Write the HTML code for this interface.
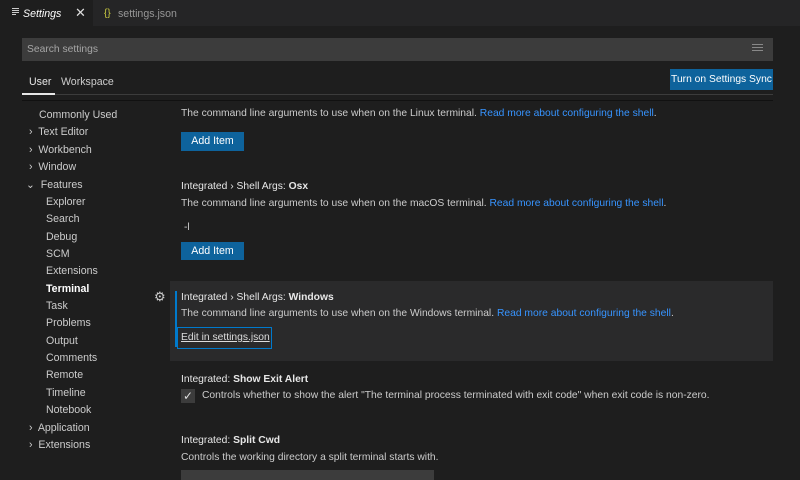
<!DOCTYPE html>
<html><head><style>
*{margin:0;padding:0;box-sizing:border-box}
body{width:800px;height:474px;overflow:hidden;background:#1e1e1e;font-family:"Liberation Sans",sans-serif;font-size:10.3px;color:#cccccc;position:relative}
.a{position:absolute;white-space:nowrap}
.t{line-height:14px}
.nav{position:absolute;line-height:14px;white-space:nowrap;font-size:10.6px}
.btn{position:absolute;background:#0e639c;color:#fff;text-align:center;line-height:18px;font-size:10.6px;white-space:nowrap}
.lk{color:#3794ff}
b{color:#e7e7e7}
.h{color:#e7e7e7}
</style></head><body>
<div class="a" style="left:0;top:0;width:800px;height:26px;background:#252526"></div>
<div class="a" style="left:0;top:0;width:93px;height:26px;background:#1e1e1e"></div>
<div class="a" style="left:12px;top:8px;width:7px;height:1px;background:#ccc;box-shadow:0 2px 0 #ccc,0 4px 0 #ccc"></div>
<div class="a" style="left:12px;top:14px;width:4px;height:1px;background:#ccc"></div>
<div class="a t" style="left:23px;top:7px;font-style:italic;color:#fff;font-size:10.6px">Settings</div>
<div class="a t" style="left:75px;top:6px;color:#ddd;font-size:13px">✕</div>
<div class="a t" style="left:104px;top:7px;color:#cbcb41;font-size:10px">{}</div>
<div class="a t" style="left:118px;top:7px;color:#969696;font-size:10.6px">settings.json</div>

<div class="a" style="left:22px;top:38px;width:751px;height:23px;background:#3c3c3c"></div>
<div class="a t" style="left:27px;top:43px;color:#a6a6a6">Search settings</div>
<div class="a" style="left:752px;top:44px;width:11px;height:1px;background:#888;box-shadow:0 3px 0 #888,0 6px 0 #888"></div>

<div class="a t" style="left:29px;top:75px;color:#e7e7e7;font-size:10.6px">User</div>
<div class="a t" style="left:61px;top:75px;color:#ccc;font-size:10.6px">Workspace</div>
<div class="a" style="left:22px;top:94px;width:751px;height:1px;background:#3c3c3c"></div>
<div class="a" style="left:22px;top:93px;width:33px;height:2px;background:#e7e7e7"></div>
<div class="btn" style="left:670px;top:69px;width:103px;height:21px;line-height:21px;font-size:10.3px">Turn on Settings Sync</div>
<div class="a" style="left:22px;top:100px;width:751px;height:1px;background:#111"></div>

<div class="nav" style="left:39px;top:108px">Commonly Used</div>
<div class="nav" style="left:29px;top:125px">›&nbsp; Text Editor</div>
<div class="nav" style="left:29px;top:143px">›&nbsp; Workbench</div>
<div class="nav" style="left:29px;top:160px">›&nbsp; Window</div>
<div class="nav" style="left:26px;top:178px">⌄ &nbsp;Features</div>
<div class="nav" style="left:46px;top:195px">Explorer</div>
<div class="nav" style="left:46px;top:212px">Search</div>
<div class="nav" style="left:46px;top:230px">Debug</div>
<div class="nav" style="left:46px;top:247px">SCM</div>
<div class="nav" style="left:46px;top:264px">Extensions</div>
<div class="nav" style="left:46px;top:282px;font-weight:bold;color:#fff">Terminal</div>
<div class="nav" style="left:46px;top:299px">Task</div>
<div class="nav" style="left:46px;top:316px">Problems</div>
<div class="nav" style="left:46px;top:334px">Output</div>
<div class="nav" style="left:46px;top:351px">Comments</div>
<div class="nav" style="left:46px;top:368px">Remote</div>
<div class="nav" style="left:46px;top:386px">Timeline</div>
<div class="nav" style="left:46px;top:403px">Notebook</div>
<div class="nav" style="left:29px;top:421px">›&nbsp; Application</div>
<div class="nav" style="left:29px;top:438px">›&nbsp; Extensions</div>

<div class="a t" style="left:181px;top:107px">The command line arguments to use when on the Linux terminal. <span class="lk">Read more about configuring the shell</span>.</div>
<div class="btn" style="left:181px;top:132px;width:63px;height:19px">Add Item</div>
<div class="a t h" style="left:181px;top:180px">Integrated › Shell Args: <b>Osx</b></div>
<div class="a t" style="left:181px;top:197px">The command line arguments to use when on the macOS terminal. <span class="lk">Read more about configuring the shell</span>.</div>
<div class="a t" style="left:184px;top:221px">-l</div>
<div class="btn" style="left:181px;top:242px;width:63px;height:18px">Add Item</div>

<div class="a" style="left:170px;top:281px;width:603px;height:80px;background:#2a2a2b"></div>
<div class="a" style="left:175px;top:291px;width:2px;height:56px;background:#007acc"></div>
<div class="a t" style="left:154px;top:290px;font-size:13px;color:#ccc">⚙</div>
<div class="a t h" style="left:181px;top:291px">Integrated › Shell Args: <b>Windows</b></div>
<div class="a t" style="left:181px;top:307px">The command line arguments to use when on the Windows terminal. <span class="lk">Read more about configuring the shell</span>.</div>
<div class="a" style="left:177px;top:327px;width:95px;height:22px;border:1px solid #007acc"></div>
<div class="a t" style="left:181px;top:331px;text-decoration:underline;color:#ddd">Edit in settings.json</div>

<div class="a t h" style="left:181px;top:373px">Integrated: <b>Show Exit Alert</b></div>
<div class="a" style="left:181px;top:389px;width:14px;height:14px;background:#3c3c3c;color:#ddd;font-size:12px;line-height:14px;text-align:center">✓</div>
<div class="a t" style="left:202px;top:389px">Controls whether to show the alert "The terminal process terminated with exit code" when exit code is non-zero.</div>
<div class="a t h" style="left:181px;top:434px">Integrated: <b>Split Cwd</b></div>
<div class="a t" style="left:181px;top:451px">Controls the working directory a split terminal starts with.</div>
<div class="a" style="left:181px;top:470px;width:253px;height:10px;background:#3c3c3c"></div>
</body></html>
